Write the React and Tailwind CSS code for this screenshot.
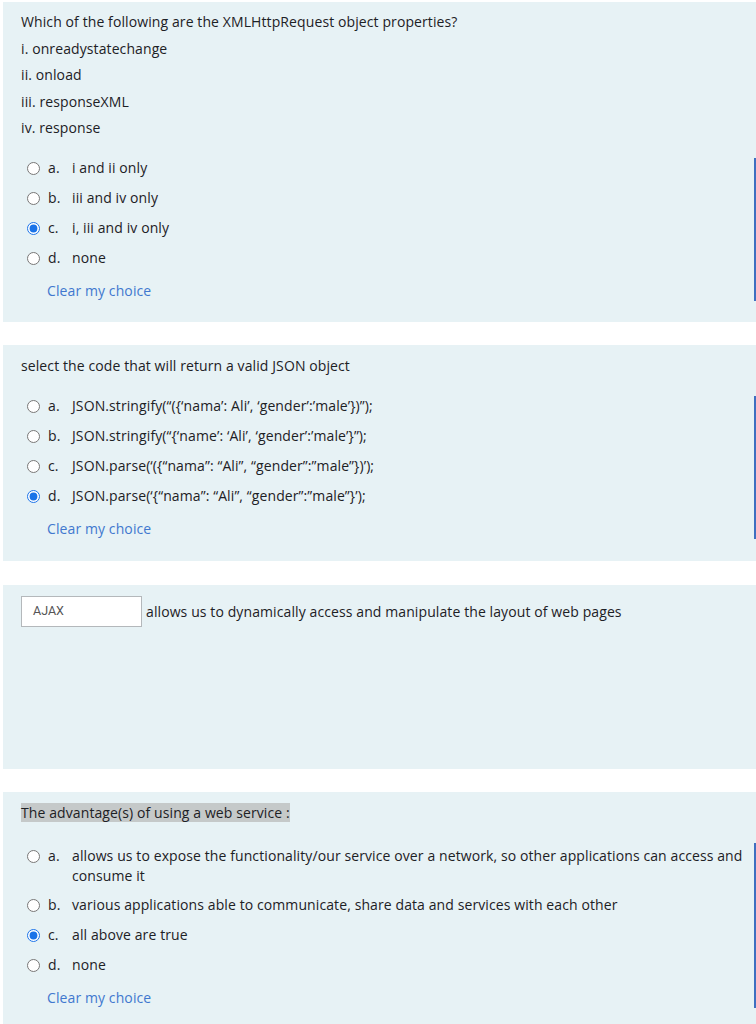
import React from "react";

const font = { fontFamily: '"Open Sans", "Liberation Sans", sans-serif' };

const Option = ({ name, letter, checked, children }) => (
  <div className="flex pl-[6px] leading-[20px]">
    <span className="flex h-5 w-[13px] shrink-0 items-center">
      <input
        type="radio"
        name={name}
        defaultChecked={checked}
        className="m-0 h-[13px] w-[13px] accent-[#1a73e8]"
      />
    </span>
    <span className="ml-[8px] w-[24px] shrink-0">{letter}</span>
    <span className="flex-1 pr-1">{children}</span>
  </div>
);

const Answers = ({ children, className = "" }) => (
  <div className={"flex " + className}>
    <div className="flex flex-1 flex-col gap-[10px]">{children}</div>
    <div className="w-[2px] bg-[#3f6fc0]" />
  </div>
);

const Clear = () => (
  <div className="mt-[3px] pl-[26px] leading-[20px] text-[#4178cf]">Clear my choice</div>
);

export default function App() {
  return (
    <div className="min-h-screen bg-white text-[14px] tracking-[0.1px] text-[#1d2125]" style={font}>
      {/* question 1 */}
      <div className="ml-[3px] mt-[2px] bg-[#e7f2f5] pb-[14px] pl-[18px] pt-[10px]">
        <p className="mb-[6.5px] leading-[20px]">Which of the following are the XMLHttpRequest object properties?</p>
        <p className="mb-[6.5px] leading-[20px]">i. onreadystatechange</p>
        <p className="mb-[6.5px] leading-[20px]">ii. onload</p>
        <p className="mb-[6.5px] leading-[20px]">iii. responseXML</p>
        <p className="leading-[20px]">iv. response</p>
        <Answers className="mt-[20px] pb-[7px]">
          <Option name="q1" letter="a.">i and ii only</Option>
          <Option name="q1" letter="b.">iii and iv only</Option>
          <Option name="q1" letter="c." checked>i, iii and iv only</Option>
          <Option name="q1" letter="d.">none</Option>
          <Clear />
        </Answers>
      </div>

      {/* question 2 */}
      <div className="ml-[3px] mt-[23px] bg-[#e7f2f5] pb-[15px] pl-[18px] pt-[11px]">
        <p className="leading-[20px]">select the code that will return a valid JSON object</p>
        <Answers className="mt-[20px] pb-[7px]">
          <Option name="q2" letter="a.">{"JSON.stringify(“({‘nama’: Ali’, ‘gender’:’male’})”);"}</Option>
          <Option name="q2" letter="b.">{"JSON.stringify(“{‘name’: ‘Ali’, ‘gender’:’male’}”);"}</Option>
          <Option name="q2" letter="c.">{"JSON.parse(‘({“nama”: “Ali”, “gender”:”male”})’);"}</Option>
          <Option name="q2" letter="d." checked>{"JSON.parse(‘{“nama”: “Ali”, “gender”:”male”}’);"}</Option>
          <Clear />
        </Answers>
      </div>

      {/* question 3 */}
      <div className="ml-[3px] mt-[24px] min-h-[184px] bg-[#e7f2f5] pl-[18px] pt-[11px]">
        <div className="flex items-center">
          <div
            className="flex h-[31px] w-[121px] items-center border border-[#b4b8bb] bg-white pl-[11px] text-[12.5px] tracking-normal text-[#555]"
            style={{ fontFamily: 'Roboto, "Liberation Sans", sans-serif' }}
          >
            AJAX
          </div>
          <span className="ml-[4px]">allows us to dynamically access and manipulate the layout of web pages</span>
        </div>
      </div>

      {/* question 4 */}
      <div className="ml-[3px] mt-[23px] bg-[#e7f2f5] pb-[14px] pl-[18px] pt-[11px]">
        <p className="leading-[20px]">
          <span className="bg-[#c5c9c9]">The advantage(s) of using a web service :</span>
        </p>
        <Answers className="mt-[20px] pb-[2px]">
          <div className="-mb-[1px] pt-[3px]">
            <Option name="q4" letter="a.">
              allows us to expose the functionality/our service over a network, so other applications can access and
              <br />
              consume it
            </Option>
          </div>
          <Option name="q4" letter="b.">various applications able to communicate, share data and services with each other</Option>
          <Option name="q4" letter="c." checked>all above are true</Option>
          <Option name="q4" letter="d.">none</Option>
          <Clear />
        </Answers>
      </div>
    </div>
  );
}
